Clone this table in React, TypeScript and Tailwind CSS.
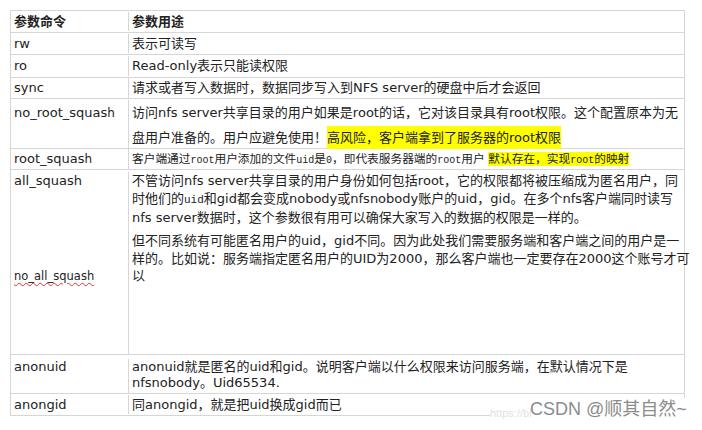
import type { ReactNode } from 'react';

const font = "font-['DejaVu_Sans','Noto_Sans_CJK_SC',sans-serif]";
const mono = "font-['Liberation_Mono','Noto_Sans_CJK_SC',monospace] text-[10px]";
const mono11 = "font-['Liberation_Mono','Noto_Sans_CJK_SC',monospace] text-[11px]";
const hl = 'bg-[#ffff00]';

function Row({
  name,
  children,
  className = '',
  nameClass = '',
}: {
  name: ReactNode;
  children: ReactNode;
  className?: string;
  nameClass?: string;
}) {
  return (
    <div className={`flex border-b border-[#d6d6d6] ${className}`}>
      <div className={`w-[118px] shrink-0 border-r border-[#d6d6d6] pl-[3px] ${nameClass}`}>{name}</div>
      <div className="flex-1 pl-[3px] whitespace-nowrap">{children}</div>
    </div>
  );
}

export default function App() {
  return (
    <div className={`relative w-[702px] h-[430px] bg-white pt-[10px] pl-[10px] text-[13px] text-[#222] ${font}`}>
      <div className="w-[675px] border-l border-r border-t border-[#d6d6d6]">
        <Row name="参数命令" className="h-[22px] items-center font-bold">
          参数用途
        </Row>
        <Row name="rw" className="h-[22px] items-center">
          表示可读写
        </Row>
        <Row name="ro" className="h-[23px] items-center">
          Read-only表示只能读权限
        </Row>
        <Row name="sync" className="h-[21px] items-center">
          请求或者写入数据时，数据同步写入到NFS server的硬盘中后才会返回
        </Row>
        <Row
          name={
            <>
              no_root_squas<span className="text-[12px]">h</span>
            </>
          }
          className="h-[50px] leading-[25px] pt-[1px]"
        >
          <div>访问nfs server共享目录的用户如果是root的话，它对该目录具有root权限。这个配置原本为无</div>
          <div>
            盘用户准备的。用户应避免使用！
            <span className={`${hl} inline-block leading-[23px]`}>高风险，客户端拿到了服务器的root权限</span>
          </div>
        </Row>
        <Row
          name={
            <>
              root_squas<span className="text-[12px]">h</span>
            </>
          }
          className="h-[21px] items-center"
        >
          <span className="text-[11.7px]">
            客户端通过<span className={mono}>root</span>用户添加的文件<span className={mono}>uid</span>是
            <span className={mono}>0</span>，即代表服务器端的<span className={mono}>root</span>用户{' '}
            <span className={hl}>
              默认存在，实现<span className={mono}>root</span>的映射
            </span>
          </span>
        </Row>
        <Row
          name={
            <div className="flex h-full flex-col">
              <div>all_squash</div>
              <div className="mt-[78px] text-[11.5px] underline decoration-wavy decoration-[#e03030] decoration-1 underline-offset-2">
                no_all_squash
              </div>
            </div>
          }
          className="h-[185px] leading-[17.5px] pt-[2px]"
        >
          <div>不管访问nfs server共享目录的用户身份如何包括root，它的权限都将被压缩成为匿名用户，同</div>
          <div>
            时他们的<span className={mono11}>uid</span>和gid都会变成nobody或nfsnobody账户的uid，gid。在多个nfs客户端同时读写
          </div>
          <div>nfs server数据时，这个参数很有用可以确保大家写入的数据的权限是一样的。</div>
          <div className="mt-[5.5px]">但不同系统有可能匿名用户的uid，gid不同。因为此处我们需要服务端和客户端之间的用户是一</div>
          <div>样的。比如说：服务端指定匿名用户的UID为2000，那么客户端也一定要存在2000这个账号才可</div>
          <div>以</div>
        </Row>
        <Row name="anonuid" className="h-[39px] leading-[16px] pt-[4px]">
          <div>anonuid就是匿名的uid和gid。说明客户端以什么权限来访问服务端，在默认情况下是</div>
          <div>nfsnobody。Uid65534.</div>
        </Row>
        <Row name="anongid" className="h-[22px] items-center">
          同anongid，就是把uid换成gid而已
        </Row>
      </div>

      <div className="absolute left-[490px] top-[398px] flex h-[24px] w-[212px] items-end bg-white pb-[4px] font-['Liberation_Sans','Noto_Sans_CJK_SC',sans-serif]">
        <span className="absolute left-0 top-[7px] text-[11px] text-[#e2e2e2]">https://bl</span>
        <span className="relative ml-[40px] text-[18px] leading-[18px] text-[#8c8c8c]">CSDN @顺其自然~</span>
      </div>
    </div>
  );
}
